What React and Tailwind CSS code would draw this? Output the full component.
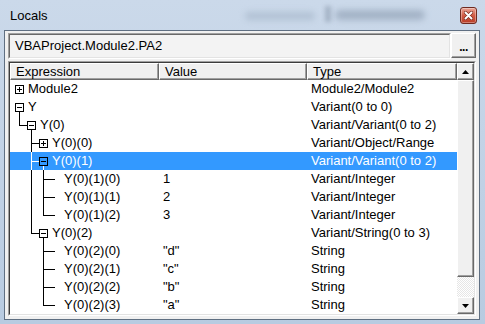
import React from "react";

const tree = [
  { label: "Module2", type: "Module2/Module2", collapsed: true },
  {
    label: "Y",
    type: "Variant(0 to 0)",
    children: [
      {
        label: "Y(0)",
        type: "Variant/Variant(0 to 2)",
        children: [
          { label: "Y(0)(0)", type: "Variant/Object/Range", collapsed: true },
          {
            label: "Y(0)(1)",
            type: "Variant/Variant(0 to 2)",
            selected: true,
            children: [
              { label: "Y(0)(1)(0)", value: "1", type: "Variant/Integer" },
              { label: "Y(0)(1)(1)", value: "2", type: "Variant/Integer" },
              { label: "Y(0)(1)(2)", value: "3", type: "Variant/Integer" },
            ],
          },
          {
            label: "Y(0)(2)",
            type: "Variant/String(0 to 3)",
            children: [
              { label: "Y(0)(2)(0)", value: '"d"', type: "String" },
              { label: "Y(0)(2)(1)", value: '"c"', type: "String" },
              { label: "Y(0)(2)(2)", value: '"b"', type: "String" },
              { label: "Y(0)(2)(3)", value: '"a"', type: "String" },
            ],
          },
        ],
      },
    ],
  },
];

// flatten the tree into rows, keeping what the connector lines need
function flatten(nodes, level = 0, cont = [], out = []) {
  nodes.forEach((n, i) => {
    const last = i === nodes.length - 1;
    const kids = n.children || [];
    out.push({ ...n, level, last, cont, expanded: kids.length > 0 });
    if (kids.length) {
      flatten(kids, level + 1, level > 0 ? [...cont, !last] : cont, out);
    }
  });
  return out;
}

const rows = flatten(tree);

const indent = ["pl-[18px]", "pl-[30px]", "pl-[42px]", "pl-[54px]"];

function TreeLines({ row }) {
  const L = row.level;
  const line = row.selected ? "#ffffff" : "#000000";
  const parts = [];
  if (L > 0) {
    const px = 9.5 + 12 * (L - 1);
    parts.push(`M${px} 0V${row.last ? 9.5 : 18}`);
    const end = row.collapsed || row.expanded ? 5 + 12 * L : 9 + 12 * L;
    parts.push(`M${px} 9.5H${end}`);
    row.cont.forEach((c, a) => {
      if (c) parts.push(`M${9.5 + 12 * a} 0V18`);
    });
  }
  if (row.expanded) parts.push(`M${9.5 + 12 * L} 13.5V18`);
  const bx = 5 + 12 * L;
  const hasBox = row.collapsed || row.expanded;
  return (
    <svg width="80" height="18" className="absolute left-0 top-0" shapeRendering="crispEdges">
      <path d={parts.join(" ")} stroke={line} strokeWidth="1" fill="none" />
      {hasBox && (
        <g stroke="#000" strokeWidth="1" fill="none">
          <rect x={bx + 0.5} y="5.5" width="8" height="8" />
          <path d={`M${bx + 2} 9.5H${bx + 7}`} />
          {row.collapsed && <path d={`M${bx + 4.5} 7V12`} />}
        </g>
      )}
    </svg>
  );
}

function Arrow({ up }) {
  return (
    <svg width="7" height="4" viewBox="0 0 7 4">
      <path d={up ? "M3.5 0L7 4H0Z" : "M0 0H7L3.5 4Z"} fill="#000" />
    </svg>
  );
}

export default function App() {
  return (
    <div className="relative flex h-[324px] w-[485px] flex-col overflow-hidden bg-gradient-to-b from-[#cbd9ea] to-[#b8cbe1] font-['Liberation_Sans',Arial,sans-serif] text-[13px] text-black">
      {/* blurred desktop behind the glass title bar */}
      <div className="pointer-events-none absolute left-[245px] top-[12px] h-[8px] w-[70px] rounded-full bg-[#9aabbf]/50 blur-[3px]" />
      <div className="pointer-events-none absolute left-[335px] top-[10px] h-[10px] w-[90px] rounded-full bg-[#7e8ea3]/50 blur-[3px]" />
      <div className="pointer-events-none absolute left-[325px] top-[6px] h-[16px] w-[6px] bg-[#6d7d92]/40 blur-[2px]" />

      {/* title bar */}
      <div className="relative flex h-[30px] items-center justify-between pl-[10px] pr-[8px]">
        <span className="leading-none">Locals</span>
        <div className="flex h-[17px] w-[17px] items-center justify-center rounded-[3px] border border-[#6e2a20] bg-gradient-to-b from-[#e9a597] via-[#d25c45] to-[#b93c26] shadow-[inset_0_0_0_1px_rgba(255,255,255,0.35)]">
          <svg width="9" height="9" viewBox="0 0 9 9">
            <path d="M1.5 1.5L7.5 7.5M7.5 1.5L1.5 7.5" stroke="#7a2b1e" strokeWidth="3.2" strokeLinecap="round" />
            <path d="M1.5 1.5L7.5 7.5M7.5 1.5L1.5 7.5" stroke="#ffffff" strokeWidth="2" strokeLinecap="round" />
          </svg>
        </div>
      </div>

      {/* client area */}
      <div className="relative ml-[4px] flex h-[290px] w-[476px] flex-col gap-[2px] border border-[#5f6f82] bg-[#f0f0f0] px-[3px] pb-[3px] pt-[2px]">
        {/* context line */}
        <div className="flex h-[26px]">
          <div className="flex flex-1 items-center border border-t-[#a0a0a0] border-l-[#a0a0a0] border-b-white border-r-white">
            <div className="flex h-full flex-1 items-center border border-t-[#696969] border-l-[#696969] border-b-[#e3e3e3] border-r-[#e3e3e3] bg-[#f3f3f3] pl-[5px]">
              VBAProject.Module2.PA2
            </div>
          </div>
          <div className="flex h-[25px] w-[25px] items-end justify-center border border-t-white border-l-white border-b-[#696969] border-r-[#696969] bg-[#f0f0f0] pb-[4px] shadow-[inset_-1px_-1px_0_#a0a0a0]">
            <span className="text-[12px] font-bold leading-none tracking-[-0.5px]">...</span>
          </div>
        </div>

        {/* list */}
        <div className="flex h-[255px] border border-t-[#a0a0a0] border-l-[#a0a0a0] border-b-white border-r-white">
          <div className="flex flex-1 border border-t-[#3c3c3c] border-l-[#3c3c3c] border-b-[#e3e3e3] border-r-[#e3e3e3] bg-white">
            <div className="flex flex-1 flex-col">
              <div className="flex h-[17px] bg-[#f0f0f0]">
                {[
                  ["Expression", "w-[149px]"],
                  ["Value", "w-[148px]"],
                  ["Type", "flex-1"],
                ].map(([t, w]) => (
                  <div
                    key={t}
                    className={`${w} flex items-center border border-t-white border-l-white border-b-[#696969] border-r-[#696969] pl-[5px] leading-none shadow-[inset_-1px_-1px_0_#a0a0a0]`}
                  >
                    {t}
                  </div>
                ))}
              </div>
              {rows.map((r) => (
                <div
                  key={r.label}
                  className={`relative flex h-[18px] items-center leading-[18px] ${
                    r.selected ? "bg-[#3399ff] text-white" : ""
                  }`}
                >
                  <TreeLines row={r} />
                  <div className={`relative w-[149px] ${indent[r.level]}`}>{r.label}</div>
                  <div className="w-[148px] pl-[4px]">{r.value || ""}</div>
                  <div className="flex-1 pl-[4px]">{r.type}</div>
                </div>
              ))}
            </div>

            {/* scrollbar */}
            <div className="flex w-[17px] flex-col">
              <div className="flex h-[17px] items-center justify-center border border-t-white border-l-white border-b-[#696969] border-r-[#696969] bg-[#f0f0f0] shadow-[inset_-1px_-1px_0_#a0a0a0]">
                <Arrow up />
              </div>
              <div className="h-[197px] border border-t-white border-l-white border-b-[#696969] border-r-[#696969] bg-[#f0f0f0] shadow-[inset_-1px_-1px_0_#a0a0a0]" />
              <div className="flex-1 bg-[repeating-conic-gradient(#ffffff_0_25%,#e6e6e6_0_50%)] bg-[length:2px_2px]" />
              <div className="flex h-[17px] items-center justify-center border border-t-white border-l-white border-b-[#696969] border-r-[#696969] bg-[#f0f0f0] shadow-[inset_-1px_-1px_0_#a0a0a0]">
                <Arrow />
              </div>
            </div>
          </div>
        </div>
      </div>
    </div>
  );
}
